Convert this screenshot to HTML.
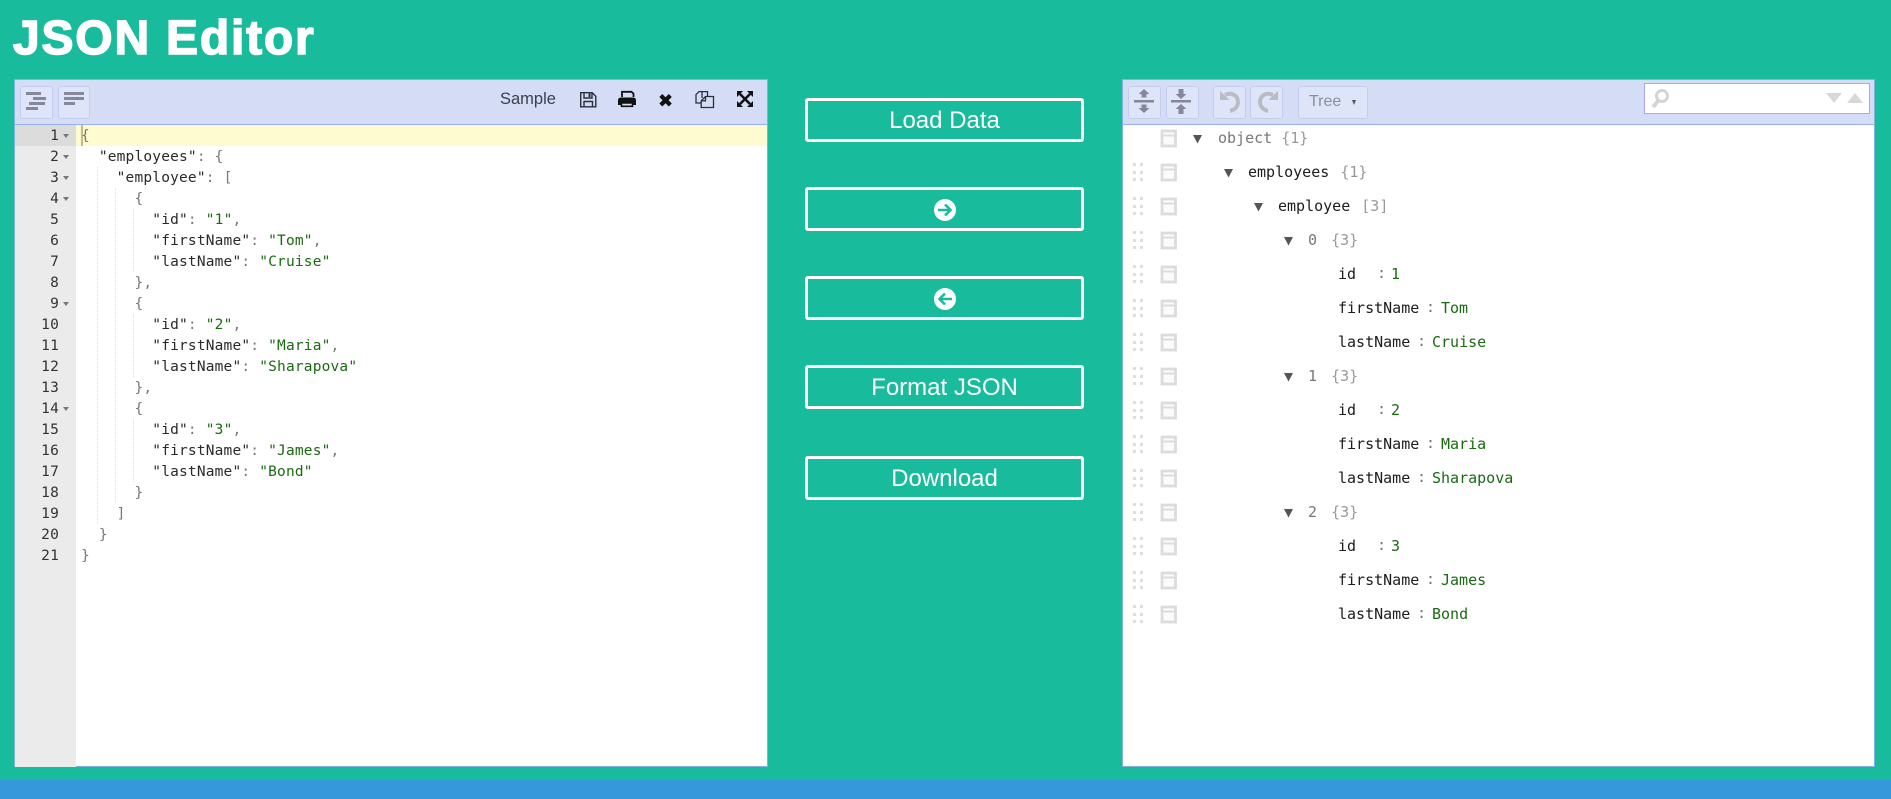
<!DOCTYPE html>
<html><head><meta charset="utf-8"><title>JSON Editor</title>
<style>
html,body{margin:0;padding:0;width:1891px;height:799px;overflow:hidden;background:#18bc9c;font-family:"Liberation Sans",sans-serif}
.a{position:absolute}
#foot{left:0;top:780px;width:1891px;height:19px;background:#3498db}
h1{position:absolute;left:13px;top:11px;margin:0;font:bold 48px/56px "Liberation Sans",sans-serif;letter-spacing:1.8px;color:#fff;-webkit-text-stroke:1.5px #fff}
.panel{position:absolute;top:79px;height:688px;background:#fff;box-sizing:border-box;border:1px solid #7fb2dc}
.tb{position:absolute;left:0;top:0;right:0;height:44px;background:#d5ddf6;border-bottom:1px solid #97b0f8}
.tbtn{position:absolute;box-sizing:border-box;height:33px;background:#dfe5f8;border:1px solid #c3cdee;border-radius:3px}
.btn{position:absolute;left:805px;width:279px;height:44px;box-sizing:border-box;border:3px solid #fff;border-radius:3px;color:#fff;text-align:center;font:24px/39px "Liberation Sans",sans-serif}
#gut{left:0;top:45px;width:61px;height:642px;background:#ebebeb}
#gutact{left:0;top:45px;width:61px;height:21px;background:#dcdcdc}
#act{left:61px;top:45px;width:691px;height:21px;background:#fffbd1}
#cur{left:66px;top:45px;width:2px;height:21px;background:#c9b988}
pre{margin:0;position:absolute;font:14.5px/21px "DejaVu Sans Mono",monospace;letter-spacing:.18px;color:#333}
#nums{left:0;top:46px;width:44px;text-align:right;color:#333}
#code{left:66px;top:46px;color:#2a2a2a}
#code i{font-style:normal;color:#777}
#code b{font-weight:normal;color:#1a6a12}
.g{position:absolute;width:0;border-left:1px dotted #dcdcdc}
.fold{position:absolute;left:48px;width:0;height:0;border-left:3.5px solid transparent;border-right:3.5px solid transparent;border-top:4px solid #777}
.t{position:absolute;font:15px/20px "DejaVu Sans Mono",monospace;color:#1c1c1c;white-space:pre}
.k{color:#777}.c{color:#999}.v{color:#1a6a12}
</style></head><body>
<h1>JSON Editor</h1>
<div class="a" id="foot"></div>

<!-- left panel -->
<div class="panel" style="left:14px;width:754px">
<div class="tb"></div>
<div class="tbtn" style="left:5px;top:6px;width:33px"></div>
<div class="tbtn" style="left:43px;top:6px;width:32px"></div>
<svg class="a" style="left:0;top:0" width="753" height="44">
<g fill="#85889a">
<rect x="11" y="12" width="15" height="3"/><rect x="18" y="17" width="13" height="3"/><rect x="14" y="22" width="16" height="3"/><rect x="11" y="27" width="12" height="3"/>
<rect x="49" y="12" width="20" height="3"/><rect x="49" y="17" width="20" height="3"/><rect x="49" y="22" width="11" height="3"/>
</g>
<g transform="translate(-15,-80)">
<g fill="none" stroke="#2a2f3a" stroke-width="1.4">
<path d="M580.700 92.700h11.500l3.600 3.600v10.500h-15.100z"/><path d="M584 93v5h8v-5"/><path d="M584 106.500v-5h8.500v5"/>
<path d="M622 97v-5.200h9.500l2 2V97" stroke-width="1.800" stroke="#111"/>
</g>
<rect x="588.500" y="93.500" width="2" height="3.500" fill="#2a2f3a"/>
<path d="M618 100.500q0-3 3-3h12q3 0 3 3v4.500h-3.200v-2h-11.600v2H618z" fill="#111"/>
<path d="M621.500 103h11v3.300h-11z" fill="none" stroke="#111" stroke-width="1.600"/>
<path d="M660.800 95.500l9.500 9.500M670.300 95.500l-9.500 9.500" fill="none" stroke="#111" stroke-width="4.200"/>
<g fill="none" stroke="#2a2f3a" stroke-width="1.300">
<path d="M702 98v-6.400h-3l-3 3v8.400h5"/><path d="M702 91.600h5.500v5"/>
<path d="M705.500 96.500h8v11h-12.300v-6.700z" fill="#d5ddf6"/><path d="M705.500 96.500v4.300h-4.300"/>
</g>
<path d="M740 94l10 10M750 94l-10 10" fill="none" stroke="#111" stroke-width="2.600"/>
<path d="M737 91h6l-6 6zM753 91v6l-6-6zM737 107v-6l6 6zM753 107h-6l6-6z" fill="#111"/>
</g>
</svg>
<div class="a" style="left:485px;top:8px;font-size:16.500px;line-height:22px;color:#3a3f4c">Sample</div>
<div class="a" id="gut"></div><div class="a" id="gutact"></div><div class="a" id="act"></div><div class="a" id="cur"></div>
<pre id="nums">1
2
3
4
5
6
7
8
9
10
11
12
13
14
15
16
17
18
19
20
21</pre>
<div class="fold" style="top:54px"></div><div class="fold" style="top:75px"></div><div class="fold" style="top:96px"></div><div class="fold" style="top:117px"></div><div class="fold" style="top:222px"></div><div class="fold" style="top:327px"></div>
<div class="g" style="left:82px;top:87px;height:357px"></div>
<div class="g" style="left:100px;top:108px;height:315px"></div>
<div class="g" style="left:118px;top:129px;height:63px"></div>
<div class="g" style="left:118px;top:234px;height:63px"></div>
<div class="g" style="left:118px;top:339px;height:63px"></div>
<pre id="code"><i>{</i>
  "employees"<i>: {</i>
    "employee"<i>: [</i>
      <i>{</i>
        "id"<i>:</i> <b>"1"</b><i>,</i>
        "firstName"<i>:</i> <b>"Tom"</b><i>,</i>
        "lastName"<i>:</i> <b>"Cruise"</b>
      <i>},</i>
      <i>{</i>
        "id"<i>:</i> <b>"2"</b><i>,</i>
        "firstName"<i>:</i> <b>"Maria"</b><i>,</i>
        "lastName"<i>:</i> <b>"Sharapova"</b>
      <i>},</i>
      <i>{</i>
        "id"<i>:</i> <b>"3"</b><i>,</i>
        "firstName"<i>:</i> <b>"James"</b><i>,</i>
        "lastName"<i>:</i> <b>"Bond"</b>
      <i>}</i>
    <i>]</i>
  <i>}</i>
<i>}</i></pre>
</div>

<!-- buttons -->
<div class="btn" style="top:98px">Load Data</div>
<div class="btn" style="top:187px"></div>
<div class="btn" style="top:276px"></div>
<div class="btn" style="top:365px">Format JSON</div>
<div class="btn" style="top:456px">Download</div>
<svg class="a" style="left:930px;top:195px" width="30" height="30"><circle cx="15" cy="15" r="11" fill="#fff"/><path d="M8 15h12M15 9.500l5.500 5.500-5.500 5.500" fill="none" stroke="#18bc9c" stroke-width="2.600"/></svg>
<svg class="a" style="left:930px;top:284px" width="30" height="30"><circle cx="15" cy="15" r="11" fill="#fff"/><path d="M22 15H10M15 9.500L9.500 15l5.500 5.500" fill="none" stroke="#18bc9c" stroke-width="2.600"/></svg>

<!-- right panel -->
<div class="panel" style="left:1122px;width:753px">
<div class="tb"></div>
<div class="tbtn" style="left:5px;top:6px;width:33px"></div>
<div class="tbtn" style="left:43px;top:6px;width:33px"></div>
<div class="tbtn" style="left:90px;top:6px;width:33px"></div>
<div class="tbtn" style="left:127px;top:6px;width:33px"></div>
<div class="tbtn" style="left:175px;top:6px;width:70px"></div>
<div class="a" style="left:186px;top:11px;font-size:16px;line-height:22px;color:#8a8f9a">Tree</div>
<div class="a" style="left:229px;top:20px;width:0;height:0;border-left:2.500px solid transparent;border-right:2.500px solid transparent;border-top:5px solid #555"></div>
<svg class="a" style="left:0;top:0" width="300" height="44">
<g fill="#85889a">
<rect x="11" y="20" width="20" height="2.500"/><path d="M21 9l5.500 5H15.500zM21 33l5.500-5H15.500z"/><rect x="18.500" y="14" width="5" height="3.500"/><rect x="18.500" y="24.500" width="5" height="3.500"/>
<rect x="48" y="20" width="20" height="2.500"/><path d="M58 19l5.500-5h-11zM58 24l5.500 5h-11z"/><rect x="55.500" y="9" width="5" height="5"/><rect x="55.500" y="29" width="5" height="5"/>
</g>
<g fill="none" stroke="#b9bcc4" stroke-width="4">
<path d="M102 15c6-3 13 0 13 7 0 5-4 8-8 9"/>
<path d="M150 15c-6-3-13 0-13 7 0 5 4 8 8 9"/>
</g>
<path d="M97 11v9h9.500zM155 11v9h-9.500z" fill="#b9bcc4"/>
</svg>
<div class="a" style="left:521px;top:3px;width:226px;height:31px;box-sizing:border-box;background:#fff;border:1px solid #a4aaea"></div>
<svg class="a" style="left:521px;top:3px" width="226" height="31">
<circle cx="18" cy="13" r="5.500" fill="none" stroke="#d4d4d4" stroke-width="3"/><path d="M14 18l-5 6" stroke="#d4d4d4" stroke-width="4"/>
<path d="M182 10h16l-8 10zM203 20h16l-8-10z" fill="#d8d8d8"/>
</svg>
</div>

<svg class="a" style="left:0;top:0" width="1891" height="799">
<defs>
<g id="dots" fill="#dedede"><rect x="0" y="-9" width="3" height="3"/><rect x="7" y="-9" width="3" height="3"/><rect x="0" y="-1" width="3" height="3"/><rect x="7" y="-1" width="3" height="3"/><rect x="0" y="6" width="3" height="3"/><rect x="7" y="6" width="3" height="3"/></g>
<g id="box"><rect x="1162" y="-7" width="13.500" height="15" fill="#fbfbfb" stroke="#dcdcdc" stroke-width="2.800"/><rect x="1162" y="-3.500" width="13.500" height="2" fill="#dcdcdc"/></g>
</defs>
<use href="#box" y="138"/>
<g transform="translate(1133,0)">
<use href="#dots" y="172"/><use href="#dots" y="206"/><use href="#dots" y="240"/><use href="#dots" y="274"/><use href="#dots" y="308"/><use href="#dots" y="342"/><use href="#dots" y="376"/><use href="#dots" y="410"/><use href="#dots" y="444"/><use href="#dots" y="478"/><use href="#dots" y="512"/><use href="#dots" y="546"/><use href="#dots" y="580"/><use href="#dots" y="614"/>
</g>
<use href="#box" y="172"/><use href="#box" y="206"/><use href="#box" y="240"/><use href="#box" y="274"/><use href="#box" y="308"/><use href="#box" y="342"/><use href="#box" y="376"/><use href="#box" y="410"/><use href="#box" y="444"/><use href="#box" y="478"/><use href="#box" y="512"/><use href="#box" y="546"/><use href="#box" y="580"/><use href="#box" y="614"/>
<g fill="#555">
<path d="M1193 135h9l-4.500 8.500zM1224 169h9l-4.500 8.500zM1254 203h9l-4.500 8.500zM1284 237h9l-4.500 8.500zM1284 373h9l-4.500 8.500zM1284 509h9l-4.500 8.500z"/>
</g>
</svg>

<div class="t k" style="left:1218px;top:128px">object <span class="c">{1}</span></div>
<div class="t" style="left:1248px;top:162px">employees <span class="c" style="margin-left:2px">{1}</span></div>
<div class="t" style="left:1278px;top:196px">employee <span class="c" style="margin-left:2px">[3]</span></div>

<div class="t k" style="left:1308px;top:230px">0 <span class="c" style="margin-left:5px">{3}</span></div>
<div class="t" style="left:1338px;top:264px">id</div><div class="t k" style="left:1377px;top:263px">:</div><div class="t v" style="left:1391px;top:264px">1</div>
<div class="t" style="left:1338px;top:298px">firstName</div><div class="t k" style="left:1426px;top:297px">:</div><div class="t v" style="left:1441px;top:298px">Tom</div>
<div class="t" style="left:1338px;top:332px">lastName</div><div class="t k" style="left:1417px;top:331px">:</div><div class="t v" style="left:1432px;top:332px">Cruise</div>

<div class="t k" style="left:1308px;top:366px">1 <span class="c" style="margin-left:5px">{3}</span></div>
<div class="t" style="left:1338px;top:400px">id</div><div class="t k" style="left:1377px;top:399px">:</div><div class="t v" style="left:1391px;top:400px">2</div>
<div class="t" style="left:1338px;top:434px">firstName</div><div class="t k" style="left:1426px;top:433px">:</div><div class="t v" style="left:1441px;top:434px">Maria</div>
<div class="t" style="left:1338px;top:468px">lastName</div><div class="t k" style="left:1417px;top:467px">:</div><div class="t v" style="left:1432px;top:468px">Sharapova</div>

<div class="t k" style="left:1308px;top:502px">2 <span class="c" style="margin-left:5px">{3}</span></div>
<div class="t" style="left:1338px;top:536px">id</div><div class="t k" style="left:1377px;top:535px">:</div><div class="t v" style="left:1391px;top:536px">3</div>
<div class="t" style="left:1338px;top:570px">firstName</div><div class="t k" style="left:1426px;top:569px">:</div><div class="t v" style="left:1441px;top:570px">James</div>
<div class="t" style="left:1338px;top:604px">lastName</div><div class="t k" style="left:1417px;top:603px">:</div><div class="t v" style="left:1432px;top:604px">Bond</div>
</body></html>
